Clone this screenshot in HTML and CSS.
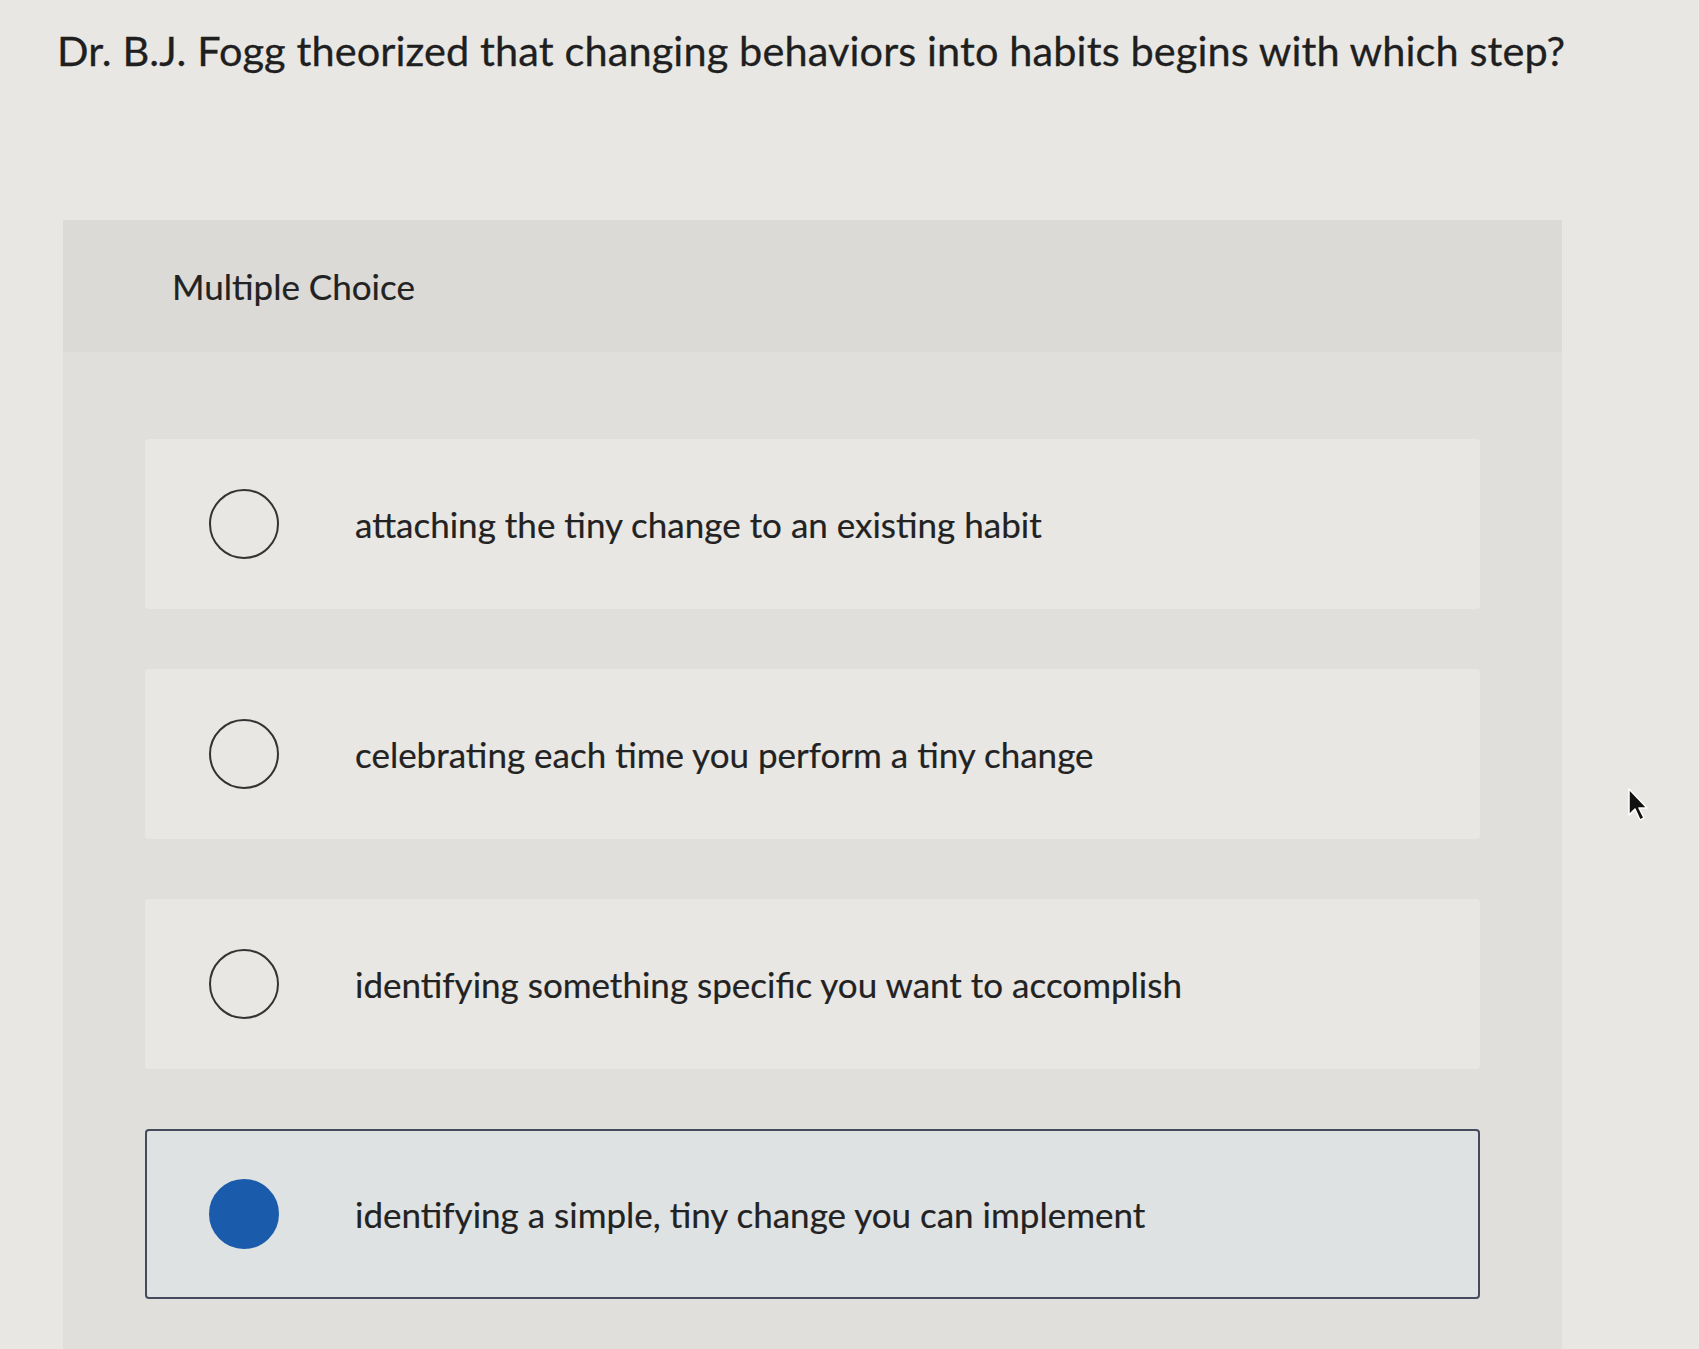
FILE: index.html
```html
<!DOCTYPE html>
<html lang="en">
<head>
<meta charset="utf-8">
<title>Multiple Choice</title>
<link rel="stylesheet" href="styles.css">
</head>
<body>
<main class="page">
  <h1 class="question">Dr. B.J. Fogg theorized that changing behaviors into habits begins with which step?</h1>
  <section class="panel">
    <header class="panel-head">Multiple Choice</header>
    <div class="options">
      <div class="option">
        <span class="radio"></span>
        <span class="label">attaching the tiny change to an existing habit</span>
      </div>
      <div class="option">
        <span class="radio"></span>
        <span class="label">celebrating each time you perform a tiny change</span>
      </div>
      <div class="option">
        <span class="radio"></span>
        <span class="label">identifying something specific you want to accomplish</span>
      </div>
      <div class="option selected">
        <span class="radio checked"></span>
        <span class="label">identifying a simple, tiny change you can implement</span>
      </div>
    </div>
  </section>
  <svg class="cursor" width="22" height="34" viewBox="0 0 22 34" aria-hidden="true">
    <path d="M2 1 L2 27 L8 21 L13 32 L17 30 L12 20 L20 20 Z" fill="#111" stroke="#fff" stroke-width="1.5" stroke-linejoin="round"/>
  </svg>
</main>
</body>
</html>
```

FILE: styles.css
```css
html, body {
  margin: 0;
  padding: 0;
}
body {
  background: #e8e7e3;
  font-family: Lato, "Open Sans", "Liberation Sans", sans-serif;
  color: #262626;
  width: 1699px;
  height: 1349px;
  overflow: hidden;
}
.page {
  position: relative;
  height: 1349px;
  box-sizing: border-box;
  padding: 26px 0 0 57px;
  display: flex;
  flex-direction: column;
}
.question {
  margin: 0;
  font-size: 41.5px;
  font-weight: 400;
  line-height: 48px;
  letter-spacing: 0.1px;
  color: #1f1f1f;
  -webkit-text-stroke: 0.3px #1f1f1f;
}
.panel {
  margin-top: 146px;
  margin-left: 6px;
  width: 1499px;
  flex: 1;
  background: #e0dfdc;
}
.panel-head {
  height: 132px;
  background: #dbdad7;
  display: flex;
  align-items: center;
  padding-left: 109px;
  font-size: 35px;
  color: #222;
  -webkit-text-stroke: 0.2px #222;
}
.options {
  display: flex;
  flex-direction: column;
  gap: 60px;
  padding: 87px 82px 0 82px;
}
.option {
  height: 170px;
  background: #e8e7e4;
  border-radius: 4px;
  display: flex;
  align-items: center;
  padding-left: 64px;
  box-sizing: border-box;
}
.option.selected {
  background: #dfe2e3;
  border: 2px solid #434b5d;
  padding-left: 62px;
}
.radio {
  width: 70px;
  height: 70px;
  box-sizing: border-box;
  border: 2.5px solid #333;
  border-radius: 50%;
  flex: none;
}
.radio.checked {
  background: #1a5cab;
  border-color: #1a5cab;
}
.label {
  margin-left: 76px;
  font-size: 35px;
  color: #222;
  -webkit-text-stroke: 0.2px #222;
}
.cursor {
  position: absolute;
  left: 1627px;
  top: 788px;
}
```
